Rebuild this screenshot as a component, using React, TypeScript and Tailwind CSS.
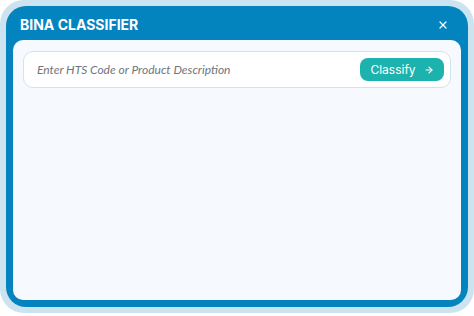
import { ArrowRight, X } from 'lucide-react';

export default function App() {
  return (
    <div className="w-[474px] h-[316px] bg-white">
      {/* outer glow frame */}
      <div className="h-[313px] rounded-[24px] bg-[#cbe4ef] p-[6px]">
        <div className="flex h-full flex-col rounded-[20px] bg-[#0484bf] px-[7px] pb-[7px]">
          {/* Header */}
          <div className="flex h-[34px] items-center justify-between pl-[7px] pr-[8px] pt-[3px]">
            <h1 className="font-['Inter',sans-serif] text-[14px] font-bold text-white">
              BINA CLASSIFIER
            </h1>
            <button className="flex h-5 w-5 items-center justify-center text-white">
              <X size={12} strokeWidth={2.6} />
            </button>
          </div>

          {/* Body */}
          <div className="flex-1 rounded-[10px] bg-[#f6f9fd] px-[10px] pt-[11px]">
            <div className="flex h-[37px] items-center justify-between rounded-[10px] border border-[#d3e3ec] bg-white pl-[13px] pr-[6px]">
              <input
                className="w-[300px] bg-transparent font-['Lato',sans-serif] text-[12px] italic text-[#6f757c] placeholder:text-[#6f757c] outline-none"
                placeholder="Enter HTS Code or Product Description"
              />
              <button className="flex h-[23px] w-[84px] items-center justify-center gap-[8px] rounded-[8px] bg-[#1cb3ae] font-['Inter',sans-serif] text-[12px] text-white">
                Classify
                <ArrowRight size={10} strokeWidth={2.8} />
              </button>
            </div>
          </div>
        </div>
      </div>
    </div>
  );
}
